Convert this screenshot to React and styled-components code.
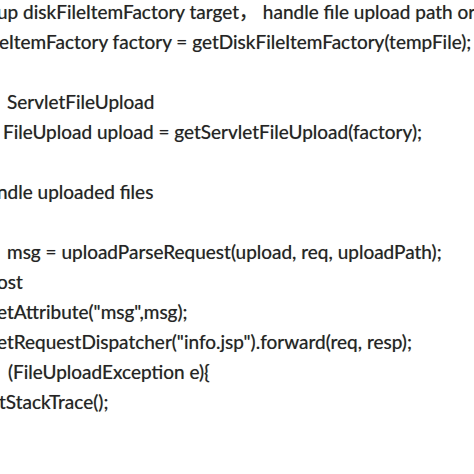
import React from 'react';
import styled, { createGlobalStyle } from 'styled-components';

const GlobalStyle = createGlobalStyle`
  html, body {
    margin: 0;
    padding: 0;
    background: #ffffff;
  }
`;

const Page = styled.div`
  width: 474px;
  height: 474px;
  overflow: hidden;
  background: #ffffff;
`;

const Code = styled.div`
  display: flex;
  flex-direction: column;
  margin-top: -3px;
  font-family: Lato, "Noto Sans CJK SC", sans-serif;
  font-size: 19px;
  color: #232323;
  text-shadow: 0 0 0.7px rgba(0, 0, 0, 0.45);
  white-space: pre;
`;

const Line = styled.div`
  height: 30px;
  line-height: 30px;
  margin-left: ${(p) => p.$indent || 0}px;
`;

const lines = [
  { text: 'up diskFileItemFactory target， handle file upload path or', indent: -3 },
  { text: 'eItemFactory factory = getDiskFileItemFactory(tempFile);', indent: -1 },
  { text: '', indent: 0 },
  { text: 'ServletFileUpload', indent: 7 },
  { text: 'FileUpload upload = getServletFileUpload(factory);', indent: 3 },
  { text: '', indent: 0 },
  { text: 'ndle uploaded files', indent: -3 },
  { text: '', indent: 0 },
  { text: 'msg = uploadParseRequest(upload, req, uploadPath);', indent: 7 },
  { text: 'ost', indent: -3 },
  { text: 'etAttribute("msg",msg);', indent: -3 },
  { text: 'etRequestDispatcher("info.jsp").forward(req, resp);', indent: -3 },
  { text: '(FileUploadException e){', indent: 8 },
  { text: 'tStackTrace();', indent: -1 },
];

const App = () => {
  return (
    <Page>
      <GlobalStyle />
      <Code>
        {lines.map((l, i) => (
          <Line key={i} $indent={l.indent}>{l.text || ' '}</Line>
        ))}
      </Code>
    </Page>
  );
};

export default App;
